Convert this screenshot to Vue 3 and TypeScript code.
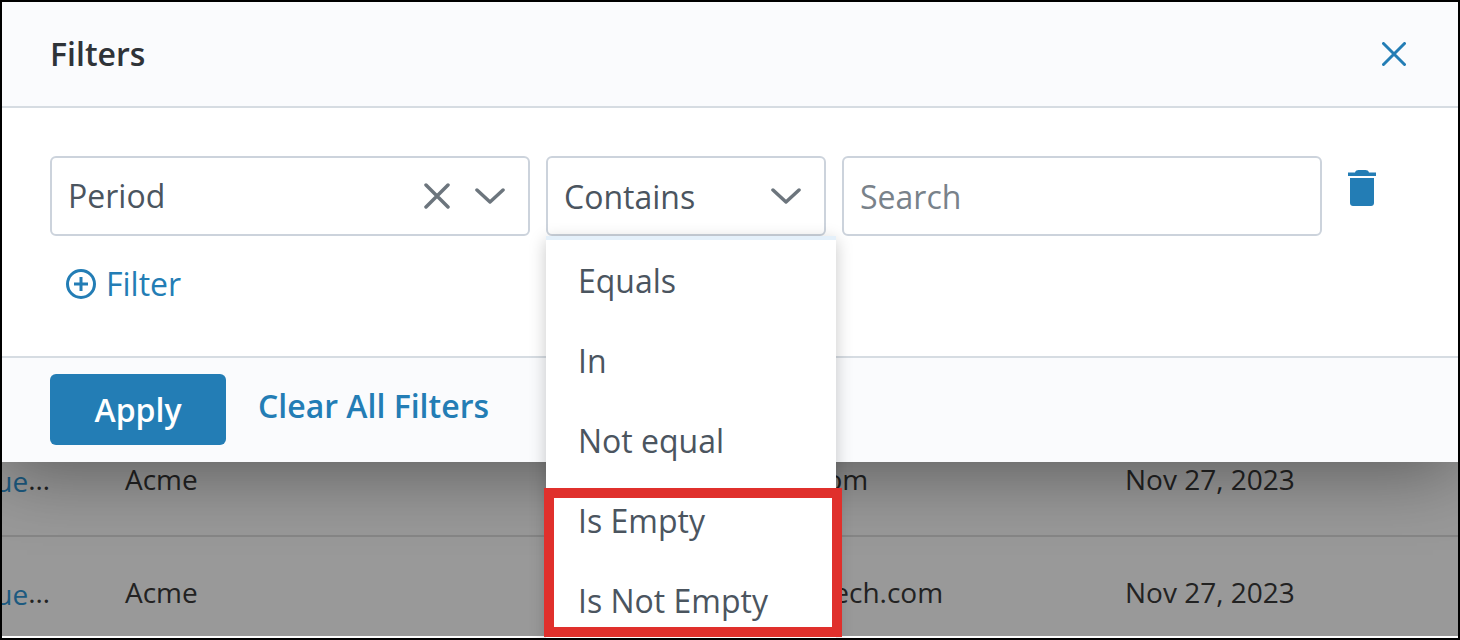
<script setup lang="ts">
const options: string[] = ['Equals', 'In', 'Not equal', 'Is Empty', 'Is Not Empty']
const rows = [
  { link: 'Value', owner: 'Acme', email: 'support@acme.com', date: 'Nov 27, 2023' },
  { link: 'Value', owner: 'Acme', email: 'support@acmeritech.com', date: 'Nov 27, 2023' }
]
</script>

<template>
  <div class="frame">
    <section class="modal">
      <header class="modal-head">
        <h2 class="title">Filters</h2>
        <svg class="close" width="24" height="24" viewBox="0 0 24 24" fill="none">
          <path d="M1.5 1.5 22.5 22.5M22.5 1.5 1.5 22.5" />
        </svg>
      </header>

      <div class="modal-body">
        <div class="filter-row">
          <div class="field field-wide">
            <span class="value value-raised">Period</span>
            <svg class="icon-x" width="26" height="26" viewBox="0 0 26 26" fill="none">
              <path d="M2 2 24 24M24 2 2 24" />
            </svg>
            <svg class="chev" width="30" height="18" viewBox="0 0 30 18" fill="none">
              <path d="M2 3 15 15 28 3" />
            </svg>
          </div>

          <div class="select-wrap">
            <div class="field field-op">
              <span class="value">Contains</span>
              <svg class="chev" width="30" height="18" viewBox="0 0 30 18" fill="none">
                <path d="M2 3 15 15 28 3" />
              </svg>
            </div>
            <ul class="menu">
              <li v-for="o in options" :key="o" class="menu-item">{{ o }}</li>
              <li class="mark" aria-hidden="true"></li>
            </ul>
          </div>

          <div class="field field-wide">
            <span class="placeholder">Search</span>
          </div>

          <svg class="trash" width="28" height="36" viewBox="0 0 28 36">
            <path d="M7 2.4C7.6.8 9 0 10.5 0h7c1.500 0 2.900.8 3.500 2.400H28V6H0V2.400Z" />
            <path d="M2 8h24v25c0 1.700-1.300 3-3 3H5c-1.700 0-3-1.300-3-3Z" />
          </svg>
        </div>

        <div class="add-filter">
          <svg width="30" height="30" viewBox="0 0 30 30" fill="none">
            <circle cx="15" cy="15" r="13.500" />
            <path d="M15 8v14M8 15h14" />
          </svg>
          <span>Filter</span>
        </div>
      </div>

      <footer class="modal-foot">
        <button class="apply" type="button">Apply</button>
        <a class="clear">Clear All Filters</a>
      </footer>
    </section>

    <div class="table">
      <div class="rows">
        <div v-for="(r, i) in rows" :key="i" class="row">
          <div class="cell-link"><span class="link">{{ r.link }}</span>…</div>
          <div class="cell-owner">{{ r.owner }}</div>
          <div class="cell-email">{{ r.email }}</div>
          <div class="cell-date">{{ r.date }}</div>
        </div>
      </div>
    </div>
  </div>
</template>

<style>
html, body { margin: 0; background: #fff; }
</style>

<style scoped>
.frame {
  box-sizing: border-box;
  width: 1460px;
  height: 640px;
  border: 2px solid #000;
  background: #fff;
  display: flex;
  flex-direction: column;
  overflow: hidden;
  font-family: "Open Sans", "Noto Sans", sans-serif;
}
.modal {
  position: relative;
  z-index: 2;
  flex: none;
  background: #fff;
  box-shadow: 0 8px 70px rgba(0, 0, 0, 0.42);
}
.modal-head {
  box-sizing: border-box;
  height: 106px;
  padding: 0 52px 0 48px;
  display: flex;
  align-items: center;
  justify-content: space-between;
  background: #fafbfd;
  border-bottom: 2px solid #d6dce2;
}
.title {
  margin: 0;
  font-size: 32px;
  font-weight: 600;
  line-height: 36px;
  color: #2f3338;
}
.close path {
  stroke: #237db5;
  stroke-width: 3;
  stroke-linecap: round;
}
.modal-body {
  box-sizing: border-box;
  height: 248px;
  padding: 48px 0 0 48px;
}
.filter-row {
  display: flex;
  align-items: flex-start;
  gap: 16px;
}
.field {
  box-sizing: border-box;
  height: 80px;
  padding: 0 23px 0 16px;
  display: flex;
  align-items: center;
  border: 2px solid #ccd3dc;
  border-radius: 6px;
  background: #fff;
  font-size: 32px;
  color: #4b555f;
}
.field-wide { width: 480px; }
.field-op { width: 280px; }
.value, .placeholder { flex: 1; }
.value-raised { padding-bottom: 2px; }
.placeholder { color: #79828a; }
.icon-x { margin-right: 25px; }
.icon-x path, .chev path {
  stroke: #6c757d;
  stroke-width: 3.5;
  stroke-linecap: round;
  stroke-linejoin: round;
}
.select-wrap { position: relative; }
.menu {
  position: absolute;
  z-index: 3;
  top: 80px;
  left: 0;
  box-sizing: border-box;
  width: 290px;
  margin: 0;
  padding: 0;
  list-style: none;
  background: #fff;
  border-top: 4px solid #e4f0fa;
  box-shadow: 0 4px 16px rgba(0, 0, 0, 0.22);
}
.menu-item {
  box-sizing: border-box;
  height: 80px;
  padding-left: 32px;
  display: flex;
  align-items: center;
  font-size: 32px;
  color: #4b555f;
}
.mark {
  position: absolute;
  top: 248px;
  left: -2px;
  box-sizing: border-box;
  width: 298px;
  height: 149px;
  border: 10px solid #e0302c;
}
.trash {
  margin: 14px 0 0 10px;
  fill: #237db5;
}
.add-filter {
  margin: 30px 0 0 16px;
  display: flex;
  align-items: center;
  gap: 10px;
  font-size: 32px;
  line-height: 36px;
  color: #237db5;
}
.add-filter circle, .add-filter path {
  stroke: #237db5;
  stroke-width: 3;
}
.modal-foot {
  box-sizing: border-box;
  height: 106px;
  padding: 16px 0 0 48px;
  display: flex;
  align-items: flex-start;
  gap: 32px;
  background: #fafbfd;
  border-top: 2px solid #d6dce2;
}
.apply {
  box-sizing: border-box;
  width: 176px;
  height: 71px;
  padding: 0;
  border: none;
  border-radius: 6px;
  background: #237db5;
  color: #fff;
  font: 600 32px "Open Sans", sans-serif;
}
.clear {
  margin-top: 10px;
  font-size: 32px;
  font-weight: 600;
  line-height: 44px;
  color: #237db5;
}
.table {
  flex: none;
  height: 174px;
  overflow: hidden;
  background: #999;
}
.rows { margin-top: -38px; }
.row {
  box-sizing: border-box;
  height: 113px;
  padding-top: 37px;
  display: flex;
  align-items: flex-start;
  border-bottom: 2px solid rgba(0, 0, 0, 0.12);
  font-size: 28px;
  line-height: 36px;
  color: #222;
}
.row:last-child { border-bottom: none; }
.cell-link {
  width: 48px;
  flex: none;
  display: flex;
  align-items: flex-start;
  justify-content: flex-end;
  overflow: hidden;
  white-space: nowrap;
}
.link { padding-top: 2px; color: #1c5a80; }
.cell-owner { margin-left: 75px; width: 481px; flex: none; }
.cell-email { width: 519px; flex: none; text-align: left; white-space: nowrap; }
.cell-date { flex: none; }
</style>
